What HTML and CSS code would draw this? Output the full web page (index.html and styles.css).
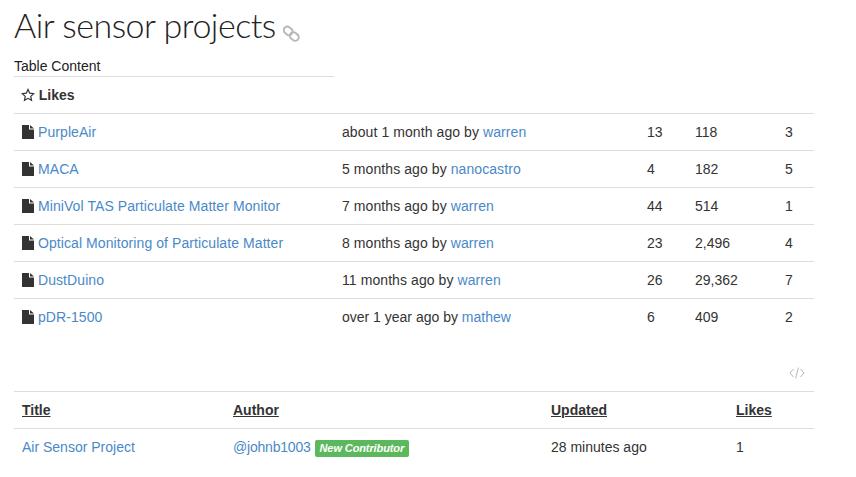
FILE: index.html
```html
<!DOCTYPE html>
<html lang="en">
<head>
<meta charset="utf-8">
<title>Air sensor projects</title>
<link rel="stylesheet" href="styles.css">
</head>
<body>
<h1 class="title">Air sensor projects <svg class="link-icon" viewBox="0 0 18 18" width="17" height="17"><g fill="none" stroke="#b8b8b8" stroke-width="2.100"><rect x="0.500" y="2.500" width="10" height="7.500" rx="3.700" transform="rotate(40 5.500 6.200)"/><rect x="7" y="8.500" width="10" height="7.500" rx="3.700" transform="rotate(40 12 12.200)"/></g></svg></h1>
<div class="caption">Table Content</div>
<table class="projects">
<colgroup><col class="c1"><col class="c2"><col class="c3"><col class="c4"><col class="c5"></colgroup>
<thead>
<tr><th class="first"><svg class="star" viewBox="0 0 24 24" width="14" height="14"><path d="M12 2.500l2.900 6.300 6.900.8-5.100 4.700 1.400 6.800-6.100-3.400-6.100 3.400 1.400-6.800-5.100-4.700 6.900-.8z" fill="none" stroke="#333" stroke-width="2"/></svg> Likes</th><th></th><th></th><th></th><th></th></tr>
</thead>
<tbody>
<tr><td><svg class="doc" viewBox="0 0 12 14" width="12" height="14"><path d="M0 0h7v4.500h5V14H0zM8 0l4 3.500H8z" fill="#333"/></svg> <a href="#">PurpleAir</a></td><td>about 1 month ago by <a href="#">warren</a></td><td>13</td><td>118</td><td>3</td></tr>
<tr><td><svg class="doc" viewBox="0 0 12 14" width="12" height="14"><path d="M0 0h7v4.500h5V14H0zM8 0l4 3.500H8z" fill="#333"/></svg> <a href="#">MACA</a></td><td>5 months ago by <a href="#">nanocastro</a></td><td>4</td><td>182</td><td>5</td></tr>
<tr><td><svg class="doc" viewBox="0 0 12 14" width="12" height="14"><path d="M0 0h7v4.500h5V14H0zM8 0l4 3.500H8z" fill="#333"/></svg> <a href="#">MiniVol TAS Particulate Matter Monitor</a></td><td>7 months ago by <a href="#">warren</a></td><td>44</td><td>514</td><td>1</td></tr>
<tr><td><svg class="doc" viewBox="0 0 12 14" width="12" height="14"><path d="M0 0h7v4.500h5V14H0zM8 0l4 3.500H8z" fill="#333"/></svg> <a href="#">Optical Monitoring of Particulate Matter</a></td><td>8 months ago by <a href="#">warren</a></td><td>23</td><td>2,496</td><td>4</td></tr>
<tr><td><svg class="doc" viewBox="0 0 12 14" width="12" height="14"><path d="M0 0h7v4.500h5V14H0zM8 0l4 3.500H8z" fill="#333"/></svg> <a href="#">DustDuino</a></td><td>11 months ago by <a href="#">warren</a></td><td>26</td><td>29,362</td><td>7</td></tr>
<tr><td><svg class="doc" viewBox="0 0 12 14" width="12" height="14"><path d="M0 0h7v4.500h5V14H0zM8 0l4 3.500H8z" fill="#333"/></svg> <a href="#">pDR-1500</a></td><td>over 1 year ago by <a href="#">mathew</a></td><td>6</td><td>409</td><td>2</td></tr>
</tbody>
</table>
<div class="embed"><svg viewBox="0 0 16 12" width="16" height="12"><path d="M4.500 2L1 6l3.500 4M11.500 2L15 6l-3.500 4M9.500 0.500L6.500 11.500" fill="none" stroke="#b9b9b9" stroke-width="1"/></svg></div>
<table class="notes">
<colgroup><col class="n1"><col class="n2"><col class="n3"><col class="n4"></colgroup>
<thead>
<tr><th><u>Title</u></th><th><u>Author</u></th><th><u>Updated</u></th><th><u>Likes</u></th></tr>
</thead>
<tbody>
<tr><td><a href="#">Air Sensor Project</a></td><td><a href="#" class="handle">@johnb1003</a> <span class="badge">New Contributor</span></td><td>28 minutes ago</td><td>1</td></tr>
</tbody>
</table>
</body>
</html>
```
FILE: styles.css
```css
* { box-sizing: border-box; }
html, body { margin: 0; background: #fff; }
body {
  padding: 0 14px;
  font-family: "Liberation Sans", Arial, sans-serif;
  font-size: 14px;
  line-height: 20px;
  color: #333;
}
a { color: #4a89c8; text-decoration: none; }
.title {
  margin: 0;
  height: 56px;
  padding-top: 5px;
  font-family: Lato, sans-serif;
  font-weight: 300;
  font-size: 34px;
  line-height: 40px;
  letter-spacing: -0.5px;
  color: #222;
}
.link-icon { vertical-align: -4px; margin-left: -2px; }
.caption {
  height: 20px;
  line-height: 21px;
  color: #222;
}
table { border-collapse: collapse; table-layout: fixed; width: 800px; }
th, td { padding: 8px; height: 37px; text-align: left; border-bottom: 1px solid #ddd; }
th { font-weight: 700; }
.c1 { width: 320px; }
.c2 { width: 305px; }
.c3 { width: 48px; }
.c4 { width: 90px; }
.c5 { width: 37px; }
.projects thead th.first {
  padding: 9px 8px 7px;
  box-shadow: inset 0 1px 0 #ddd;
  letter-spacing: -0.05px;
}
.projects tbody tr:last-child td { border-bottom: 0; }
.projects tbody td:nth-child(-n+2) { letter-spacing: 0.08px; }
.projects tbody tr:last-child td:nth-child(2) { letter-spacing: 0; }
.doc { vertical-align: -2px; }
.star { vertical-align: -2px; margin-left: -1px; }
.embed {
  width: 800px;
  height: 56px;
  padding: 32px 9px 0 0;
  text-align: right;
  line-height: 12px;
}
.embed svg { display: inline-block; }
.notes { border-top: 1px solid #ddd; }
.n1 { width: 211px; }
.n2 { width: 318px; }
.n3 { width: 185px; }
.n4 { width: 86px; }
.notes th, .notes td { height: 37px; }
.notes tbody td { border-bottom: 0; }
.handle { letter-spacing: -0.2px; }
.badge {
  display: inline-block;
  padding: 0 5px;
  height: 17px;
  line-height: 17px;
  background: #5cb85c;
  border-radius: 2px;
  color: #fff;
  font-size: 11px;
  font-weight: 700;
  font-style: italic;
  letter-spacing: -0.1px;
}
```
